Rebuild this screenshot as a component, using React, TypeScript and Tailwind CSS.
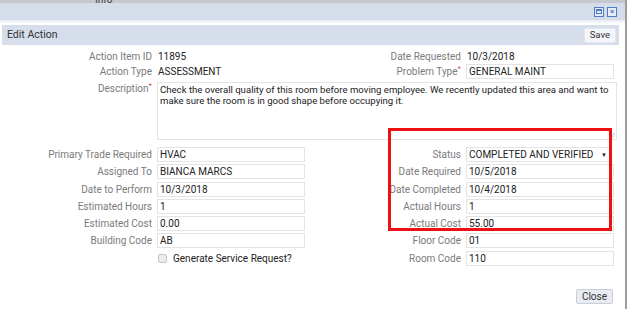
import React from "react";

const Label = ({ children, star }: { children: React.ReactNode; star?: boolean }) => (
  <div className="flex h-[15px] items-center justify-end whitespace-nowrap text-[10px] text-[#7b7b7b]">
    {children}
    {star && <span className="relative -top-[3px] text-[8px] text-[#d9534f]">*</span>}
  </div>
);

const Field = ({ value, className = "" }: { value?: string; className?: string }) => (
  <div
    className={`flex h-[15px] items-center border border-[#e4e4e4] bg-white pl-[2px] text-[10px] text-[#222] ${className}`}
  >
    {value}
  </div>
);

const Plain = ({ value }: { value: string }) => (
  <div className="flex h-[15px] items-center pl-[1px] text-[10px] text-[#222]">{value}</div>
);

export default function App() {
  return (
    <div
      className="relative h-[309px] w-[629px] overflow-hidden bg-white"
      style={{ fontFamily: "Roboto, 'Liberation Sans', sans-serif" }}
    >
      <div className="flex h-[309px] w-[627px] flex-col border-r-2 border-[#9c9c9c]">
        {/* outer strip, page text behind the dialog peeks through */}
        <div className="relative h-[3px] overflow-hidden bg-[#c6c8ce]">
          <span className="absolute left-[95px] -top-[8px] text-[10px] text-[#444]">Info</span>
        </div>

        {/* window title bar */}
        <div className="flex h-[17px] items-center justify-end gap-[3px] bg-[#d5dcea] pr-[8px]">
          <div className="flex h-[10px] w-[10px] items-center justify-center border border-[#4f7cc4] bg-[#e4ecf8]">
            <div className="h-[5px] w-[6px] border border-t-2 border-[#4f7cc4]" />
          </div>
          <div className="flex h-[10px] w-[10px] items-center justify-center border border-[#4f7cc4] bg-[#e4ecf8] text-[8px] leading-none font-bold text-[#4f7cc4]">
            ×
          </div>
        </div>

        <div className="h-[4px] bg-gradient-to-b from-[#e8ebf2] to-white" />

        {/* Edit Action bar */}
        <div className="mx-[2px] mr-[6px] mt-[1px] flex h-[20px] items-center justify-between bg-[#d6ddeb] pl-[5px] pr-[3px]">
          <span className="text-[10.5px] text-[#333]">Edit Action</span>
          <button className="h-[15px] rounded-[2px] border border-[#e2e6ee] bg-[#f5f6f9] px-[5px] text-[9.5px] leading-none text-[#333]">
            Save
          </button>
        </div>

        {/* form */}
        <div className="mt-[4px] grid grid-cols-[152px_148px_151px_148px] gap-x-[5px]">
          <Label>Action Item ID</Label>
          <Plain value="11895" />
          <Label>Date Requested</Label>
          <Plain value="10/3/2018" />

          <Label>Action Type</Label>
          <Plain value="ASSESSMENT" />
          <Label star>Problem Type</Label>
          <Field value="GENERAL MAINT" />

          <div className="mt-[2px]">
            <Label star>Description</Label>
          </div>
          <div className="relative col-span-3 mt-[3px] h-[58px] w-[460px] border border-[#e4e4e4] px-[2px] pt-[1px] text-[9.6px] leading-[11px] text-[#222]">
            Check the overall quality of this room before moving employee. We recently updated this area and want to
            make sure the room is in good shape before occupying it.
            <svg className="absolute bottom-[1px] right-[1px]" width="6" height="6" viewBox="0 0 6 6">
              <path d="M5.5 1 L1 5.5 M5.5 3.5 L3.5 5.5" stroke="#aaa" strokeWidth="0.8" />
            </svg>
          </div>
        </div>

        <div className="mt-[7px] grid grid-cols-[152px_148px_151px_148px] gap-x-[5px] gap-y-[2.3px]">
          <Label>Primary Trade Required</Label>
          <Field value="HVAC" />
          <Label>Status</Label>
          <div className="flex h-[15px] w-[145px] items-center justify-between border border-[#e4e4e4] pl-[2px] pr-[3px] text-[10px] text-[#222]">
            <span>COMPLETED AND VERIFIED</span>
            <span className="text-[6px]">▼</span>
          </div>

          <Label>Assigned To</Label>
          <Field value="BIANCA MARCS" />
          <Label>Date Required</Label>
          <Field value="10/5/2018" />

          <Label>Date to Perform</Label>
          <Field value="10/3/2018" />
          <Label>Date Completed</Label>
          <Field value="10/4/2018" />

          <Label>Estimated Hours</Label>
          <Field value="1" />
          <Label>Actual Hours</Label>
          <Field value="1" />

          <Label>Estimated Cost</Label>
          <Field value="0.00" />
          <Label>Actual Cost</Label>
          <Field value="55.00" />

          <Label>Building Code</Label>
          <Field value="AB" />
          <Label>Floor Code</Label>
          <Field value="01" />

          <div />
          <div className="flex h-[15px] items-center gap-[6px] pl-[1px] text-[10px] text-[#222]">
            <div className="h-[9px] w-[9px] rounded-[2px] border border-[#c4c4c4] bg-[#ececec]" />
            <span>Generate Service Request?</span>
          </div>
          <Label>Room Code</Label>
          <Field value="110" />
        </div>

        <div className="mt-auto mb-[5px] flex justify-end pr-[12px]">
          <button className="h-[15px] rounded-[2px] border border-[#c9cdd6] bg-[#e9ecf3] px-[5px] text-[10px] leading-none text-[#333]">
            Close
          </button>
        </div>
      </div>

      {/* highlight box */}
      <div className="absolute left-[388px] top-[128px] h-[103px] w-[224px] border-[3px] border-[#ee1111]" />
    </div>
  );
}
